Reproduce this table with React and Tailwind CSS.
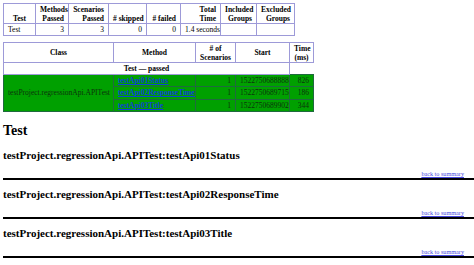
const summary = [
  { test: "Test", passed: 3, scenarios: 3, skipped: 0, failed: 0, time: "1.4 seconds" },
];

const methods = [
  { name: "testApi01Status", scenarios: 1, start: "1522750688888", ms: 826 },
  { name: "testApi02ResponseTime", scenarios: 1, start: "1522750689715", ms: 186 },
  { name: "testApi03Title", scenarios: 1, start: "1522750689902", ms: 344 },
];

const th = "border border-[#9d9ad8] px-[4px] py-0 font-bold leading-[9px] whitespace-nowrap";
const td = "border border-[#9d9ad8] px-[4px] py-0 leading-[9px] whitespace-nowrap";
const gtd = "border border-[#1f6a3e] bg-[#00a000] px-[4px] py-0 leading-[9px] text-[#0c330c] whitespace-nowrap";

function SummaryTable() {
  return (
    <table className="w-[291px] table-fixed border-collapse text-[7.5px]">
      <colgroup>
        <col className="w-[32px]" />
        <col className="w-[33px]" />
        <col className="w-[40px]" />
        <col className="w-[38px]" />
        <col className="w-[34px]" />
        <col className="w-[40px]" />
        <col className="w-[36px]" />
        <col className="w-[38px]" />
      </colgroup>
      <thead>
        <tr className="h-[20px] align-bottom">
          <th className={`${th} text-center`}>Test</th>
          <th className={`${th} text-right`}>Methods<br />Passed</th>
          <th className={`${th} text-right`}>Scenarios<br />Passed</th>
          <th className={`${th} text-right`}># skipped</th>
          <th className={`${th} text-right`}># failed</th>
          <th className={`${th} text-right`}>Total<br />Time</th>
          <th className={`${th} text-right`}>Included<br />Groups</th>
          <th className={`${th} text-right`}>Excluded<br />Groups</th>
        </tr>
      </thead>
      <tbody>
        {summary.map((s) => (
          <tr key={s.test} className="h-[12px] align-middle">
            <td className={`${td} text-left`}>{s.test}</td>
            <td className={`${td} text-right`}>{s.passed}</td>
            <td className={`${td} text-right`}>{s.scenarios}</td>
            <td className={`${td} text-right`}>{s.skipped}</td>
            <td className={`${td} text-right`}>{s.failed}</td>
            <td className={`${td} text-left`}>{s.time}</td>
            <td className={td}></td>
            <td className={td}></td>
          </tr>
        ))}
      </tbody>
    </table>
  );
}

function MethodTable() {
  return (
    <table className="mt-[6px] w-[310px] table-fixed border-collapse text-[7.5px]">
      <colgroup>
        <col className="w-[110px]" />
        <col className="w-[82px]" />
        <col className="w-[40px]" />
        <col className="w-[54px]" />
        <col className="w-[24px]" />
      </colgroup>
      <thead>
        <tr className="h-[20px] align-middle">
          <th className={`${th} text-center`}>Class</th>
          <th className={`${th} text-center`}>Method</th>
          <th className={`${th} text-center`}># of<br />Scenarios</th>
          <th className={`${th} text-center`}>Start</th>
          <th className={`${th} text-center`}>Time<br />(ms)</th>
        </tr>
      </thead>
      <tbody>
        <tr className="h-[12px]">
          <th colSpan={4} className={`${th} text-center`}>Test — passed</th>
        </tr>
        {methods.map((m, i) => (
          <tr key={m.name} className="h-[12.3px] align-middle">
            {i === 0 && (
              <td rowSpan={3} className={`${gtd} text-left`}>testProject.regressionApi.APITest</td>
            )}
            <td className={`${gtd} text-left`}>
              <a href="#" className="font-bold text-[#0f3fd6] underline">{m.name}</a>
            </td>
            <td className={`${gtd} text-right`}>{m.scenarios}</td>
            <td className={`${gtd} text-right`}>{m.start}</td>
            <td className={`${gtd} text-right`}>{m.ms}</td>
          </tr>
        ))}
      </tbody>
    </table>
  );
}

export default function App() {
  return (
    <div className="min-h-[265px] bg-white font-serif text-black">
      <div className="pl-[3px] pt-[3px] [font-family:Liberation_Serif,serif]">
        <SummaryTable />
        <MethodTable />
        <h2 className="mt-[11px] text-[14px] font-bold leading-[16px]">Test</h2>
        <div className="mt-[10px]">
          {methods.map((m) => (
            <div key={m.name} className="mb-[8px]">
              <h3 className="text-[11px] font-bold leading-[13px]">
                testProject.regressionApi.APITest:{m.name}
              </h3>
              <div className="mt-[7px] h-[11px] border-b-2 border-black pr-[10px] text-right text-[6.2px] leading-[9px]">
                <a href="#" className="text-[#4a4ae0] underline">back to summary</a>
              </div>
            </div>
          ))}
        </div>
      </div>
    </div>
  );
}
